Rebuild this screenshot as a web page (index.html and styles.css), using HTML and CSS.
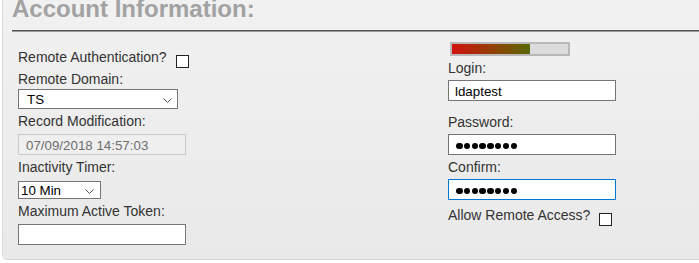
FILE: index.html
```html
<!DOCTYPE html>
<html>
<head>
<meta charset="utf-8">
<link rel="stylesheet" href="styles.css">
</head>
<body>
<div class="panel">
  <h2 class="title">Account Information:</h2>
  <div class="rule"></div>
  <div class="cols">
    <div class="col">
      <div class="label first">Remote Authentication?<span class="check"></span></div>
      <div class="label">Remote Domain:</div>
      <div class="select domain"><span>TS</span><svg class="chev" width="9" height="5" viewBox="0 0 9 5"><path d="M0.5 0.5 L4.5 4.5 L8.5 0.5" stroke="#555" fill="none"/></svg></div>
      <div class="label after-select">Record Modification:</div>
      <div class="input readonly">07/09/2018 14:57:03</div>
      <div class="label after-input">Inactivity Timer:</div>
      <div class="select timer"><span>10 Min</span><svg class="chev" width="9" height="5" viewBox="0 0 9 5"><path d="M0.5 0.5 L4.5 4.5 L8.5 0.5" stroke="#555" fill="none"/></svg></div>
      <div class="label after-select">Maximum Active Token:</div>
      <div class="input"></div>
    </div>
    <div class="col">
      <div class="strength"><div class="strength-fill" style="width:67%"></div></div>
      <div class="label login-label">Login:</div>
      <div class="input">ldaptest</div>
      <div class="label pw-label">Password:</div>
      <div class="input dots"><i></i><i></i><i></i><i></i><i></i><i></i><i></i><i></i></div>
      <div class="label after-input">Confirm:</div>
      <div class="input dots focused"><i></i><i></i><i></i><i></i><i></i><i></i><i></i><i></i></div>
      <div class="label allow">Allow Remote Access?<span class="check"></span></div>
    </div>
  </div>
</div>
</body>
</html>
```
FILE: styles.css
```css
html, body {
  margin: 0;
  padding: 0;
  background: #ffffff;
}
body {
  font-family: "Liberation Sans", Arial, sans-serif;
  overflow: hidden;
}
.panel {
  margin-left: 2px;
  width: 720px;
  border-left: 1px solid #dcdcdc;
  border-bottom: 1px solid #d4d4d4;
  border-bottom-left-radius: 5px;
  background: linear-gradient(#f1f1f1, #e9e9e9);
  padding: 0 0 14px 9px;
}
.title {
  margin: 0;
  font-size: 24px;
  line-height: 18px;
  font-weight: bold;
  color: #a2a2a2;
}
.rule {
  margin-top: 12px;
  border-top: 1px solid #555555;
  border-bottom: 1px solid #9a9a9a;
}
.cols {
  display: grid;
  grid-template-columns: 430px 1fr;
  padding: 10px 0 0 6px;
}
.col {
  display: flex;
  flex-direction: column;
  align-items: flex-start;
}
.label {
  font-size: 14px;
  line-height: 18px;
  height: 18px;
  color: #333333;
  white-space: nowrap;
}
.label.first {
  margin-top: 6px;
  margin-bottom: 4px;
}
.after-select {
  margin-top: 3px;
}
.after-input {
  margin-top: 3px;
}
.check {
  display: inline-block;
  width: 13px;
  height: 13px;
  box-sizing: border-box;
  border: 1px solid #222222;
  background: #ffffff;
  margin-left: 9px;
  vertical-align: -6px;
}
.select {
  box-sizing: border-box;
  display: flex;
  align-items: center;
  justify-content: space-between;
  border: 1px solid #767676;
  background: #ffffff;
  font-size: 13.33px;
  color: #000000;
}
.select.domain {
  width: 160px;
  height: 20px;
  margin-top: 1px;
  padding: 1px 5px 0 8px;
}
.select.timer {
  width: 83px;
  height: 18px;
  margin-top: 5px;
  padding: 1px 6px 0 2px;
}
.chev {
  display: block;
  margin-top: 1px;
}
.input {
  box-sizing: border-box;
  width: 168px;
  height: 21px;
  margin-top: 4px;
  border: 1px solid #767676;
  background: #ffffff;
  padding: 2px 6px 0 6px;
  font-size: 13.33px;
  line-height: 17px;
  color: #000000;
}
.input.readonly {
  background: #efefef;
  border-color: #c9c9c9;
  color: #6d6d6d;
  padding-left: 7px;
}
.strength {
  box-sizing: border-box;
  width: 120px;
  height: 14px;
  margin-left: 2px;
  border: 2px solid #b8b8b8;
  background: #dcdcdc;
}
.strength-fill {
  height: 100%;
  background: linear-gradient(to right, #d21010, #586a00);
}
.login-label {
  margin-top: 3px;
}
.col .login-label + .input {
  margin-top: 3px;
}
.pw-label {
  margin-top: 12px;
}
.pw-label + .input {
  margin-top: 3px;
}
.dots {
  display: flex;
  align-items: center;
  gap: 1.3px;
  padding: 3px 6px 0 7px;
}
.dots i {
  display: block;
  width: 6.5px;
  height: 6.5px;
  border-radius: 50%;
  background: #000000;
}
.focused {
  border-color: #0078d7;
}
.col .after-input + .focused {
  margin-top: 3px;
}
.allow {
  margin-top: 6px;
}
```
